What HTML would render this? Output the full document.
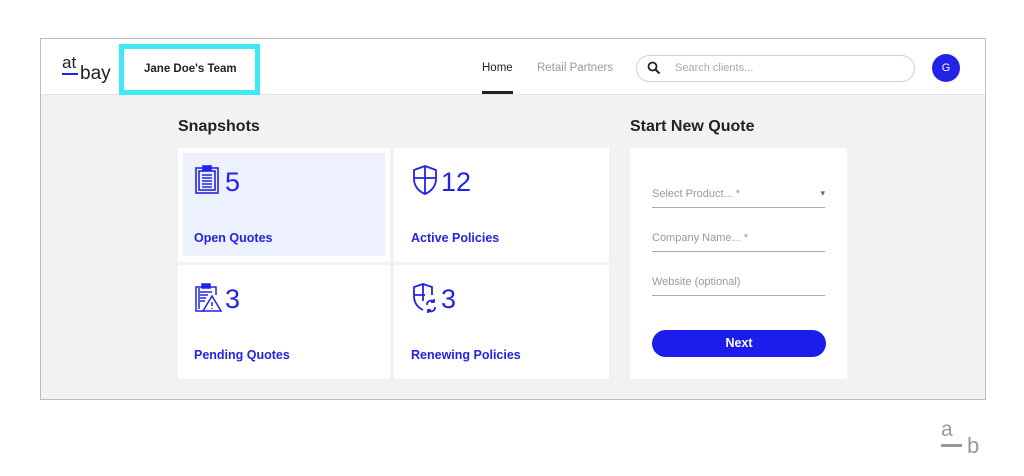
<!DOCTYPE html>
<html><head><meta charset="utf-8"><style>
*{margin:0;padding:0;box-sizing:border-box}
body{width:1024px;height:476px;background:#fff;position:relative;overflow:hidden;font-family:"Liberation Sans",Arial,sans-serif}
.a{position:absolute}
.frame{left:40px;top:38px;width:946px;height:362px;border:1px solid #bdbdbd;background:#f2f2f2}
.hdr{left:41px;top:39px;width:944px;height:56px;background:#fff;border-bottom:1px solid #e6e6e6}
.card{background:#fff}
.num{font-size:27px;color:#2323e6;font-weight:400}
.lbl{font-size:12.5px;font-weight:bold;color:#2323e6}
.fld{left:652px;width:173px;border-bottom:1px solid #aaa;font-size:11px;color:#999;height:20px}
</style></head><body>
<div class="a frame"></div>
<div class="a hdr"></div>
<div class="a" style="left:62px;top:54px;font-size:17px;color:#222;line-height:17px">at</div>
<div class="a" style="left:62px;top:73px;width:16px;height:2px;background:#2323e6"></div>
<div class="a" style="left:80px;top:64px;font-size:19px;color:#222;line-height:20px">bay</div>
<div class="a" style="left:119px;top:44px;width:141px;height:51px;border:5px solid #40e8f3;background:#fff"></div>
<div class="a" style="left:144px;top:63px;font-size:11.5px;font-weight:bold;color:#222">Jane Doe's Team</div>
<div class="a" style="left:482px;top:62px;font-size:11.5px;color:#222">Home</div>
<div class="a" style="left:482px;top:91px;width:31px;height:3px;background:#222"></div>
<div class="a" style="left:537px;top:62px;font-size:11.5px;color:#999">Retail Partners</div>
<div class="a" style="left:636px;top:55px;width:279px;height:27px;border:1px solid #d0d0d0;border-radius:14px;background:#fff"></div>
<svg class="a" style="left:647px;top:61px" width="14" height="14" viewBox="0 0 14 14"><circle cx="5.5" cy="5.5" r="4" fill="none" stroke="#222" stroke-width="1.8"/><path d="M8.5 8.5L12.5 12.5" stroke="#222" stroke-width="2"/></svg>
<div class="a" style="left:675px;top:62px;font-size:11px;color:#aaa">Search clients...</div>
<div class="a" style="left:932px;top:54px;width:28px;height:28px;border-radius:50%;background:#2323e6;color:#fff;font-size:11px;text-align:center;line-height:28px">G</div>

<div class="a" style="left:178px;top:118px;font-size:16px;font-weight:bold;color:#222">Snapshots</div>
<div class="a" style="left:630px;top:118px;font-size:16px;font-weight:bold;color:#222">Start New Quote</div>

<div class="a card" style="left:178px;top:148px;width:212px;height:114px"></div>
<div class="a" style="left:183px;top:153px;width:202px;height:103px;background:#ecf1fd"></div>
<div class="a card" style="left:394px;top:148px;width:215px;height:114px"></div>
<div class="a card" style="left:178px;top:265px;width:212px;height:114px"></div>
<div class="a card" style="left:394px;top:265px;width:215px;height:114px"></div>

<svg class="a" style="left:195px;top:165px" width="26" height="30" viewBox="0 0 26 30" fill="none" stroke="#2323e6" stroke-width="1.6"><rect x="1" y="3" width="22" height="25"/><rect x="4" y="6" width="16" height="19"/><rect x="8" y="1" width="8" height="4" fill="#2323e6"/><path d="M7 10h10M7 13h10M7 16h10M7 19h10M7 22h10"/></svg>
<div class="a num" style="left:225px;top:167px">5</div>
<div class="a lbl" style="left:194px;top:231px">Open Quotes</div>

<svg class="a" style="left:412px;top:164px" width="26" height="32" viewBox="0 0 26 32" fill="none" stroke="#2323e6" stroke-width="1.8"><path d="M13 2L24 6v9c0 8-6 13-11 15C8 28 2 23 2 15V6z"/><path d="M13 2v28M2 14h22"/></svg>
<div class="a num" style="left:441px;top:167px">12</div>
<div class="a lbl" style="left:411px;top:231px">Active Policies</div>

<svg class="a" style="left:194px;top:283px" width="28" height="30" viewBox="0 0 28 30" fill="none" stroke="#2323e6" stroke-width="1.5"><path d="M10 28H2V4h20v8"/><rect x="8" y="1" width="8" height="4" fill="#2323e6"/><path d="M6 9h12M6 12h8M6 15h6M6 18h5M5 5v21"/><path d="M18 13L27 28H9z"/><path d="M18 19v4M18 25v1"/></svg>
<div class="a num" style="left:225px;top:284px">3</div>
<div class="a lbl" style="left:194px;top:348px">Pending Quotes</div>

<svg class="a" style="left:412px;top:282px" width="28" height="32" viewBox="0 0 28 32" fill="none" stroke="#2323e6" stroke-width="1.8"><path d="M20 13V5L11 2 2 5v9c0 8 5 12 9 14"/><path d="M11 2v17M2 13h11"/><path d="M15 23a4 4 0 0 1 7-3M23 25a4 4 0 0 1-7 3"/><path d="M22 17v3h-3M16 31v-3h3"/></svg>
<div class="a num" style="left:441px;top:284px">3</div>
<div class="a lbl" style="left:411px;top:348px">Renewing Policies</div>

<div class="a card" style="left:630px;top:148px;width:217px;height:231px"></div>
<div class="a fld" style="top:188px">Select Product... *<span style="float:right;font-size:9px;color:#666">&#9662;</span></div>
<div class="a fld" style="top:232px">Company Name... *</div>
<div class="a fld" style="top:276px">Website (optional)</div>
<div class="a" style="left:652px;top:330px;width:174px;height:27px;border-radius:14px;background:#1c1ceb;color:#fff;font-weight:bold;font-size:12.5px;text-align:center;line-height:27px">Next</div>

<div class="a" style="left:941px;top:420px;font-size:21px;color:#999;line-height:20px">a</div>
<div class="a" style="left:941px;top:444px;width:21px;height:3px;background:#999"></div>
<div class="a" style="left:967px;top:435px;font-size:22px;color:#999;line-height:22px">b</div>
</body></html>
